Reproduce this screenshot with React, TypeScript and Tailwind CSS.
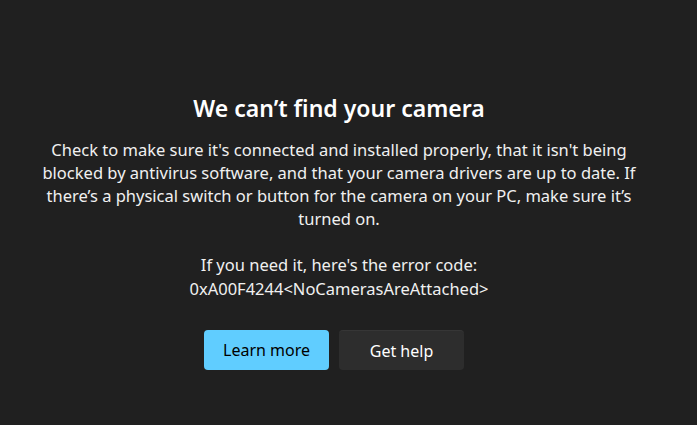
import React from 'react';

const font = { fontFamily: '"Noto Sans", "Open Sans", sans-serif' };

export default function App() {
  return (
    <div className="w-[697px] h-[425px] bg-[#202020] text-white overflow-hidden" style={font}>
      <div className="flex flex-col items-center pt-[93px] pr-[19px]">
        <h1 className="text-[23px] leading-[30px] font-semibold text-white">We can’t find your camera</h1>
        <p className="mt-[15px] text-center text-[16.5px] leading-[23px] text-[#f0f0f0] whitespace-nowrap">
          Check to make sure it's connected and installed properly, that it isn't being
          <br />
          blocked by antivirus software, and that your camera drivers are up to date. If
          <br />
          there’s a physical switch or button for the camera on your PC, make sure it’s
          <br />
          turned on.
        </p>
        <p className="mt-[23px] text-center text-[16.5px] leading-[23.5px] text-[#f0f0f0]">
          If you need it, here's the error code:
          <br />
          0xA00F4244&lt;NoCamerasAreAttached&gt;
        </p>
        <div className="mt-[30px] mr-[10px] flex gap-[10px]">
          <button className="w-[125px] h-[40px] rounded-[4px] bg-[#60cdff] text-[#000000] text-[16px]">
            Learn more
          </button>
          <button className="w-[125px] h-[40px] rounded-[4px] bg-[#2d2d2d] border-t border-[#363636] text-[#ffffff] text-[16px]">
            Get help
          </button>
        </div>
      </div>
    </div>
  );
}
